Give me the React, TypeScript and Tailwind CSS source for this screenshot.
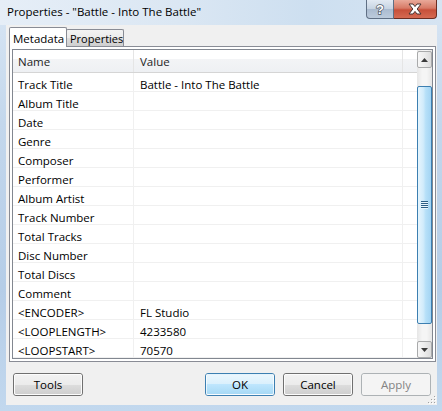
import React from "react";

const rows: [string, string][] = [
  ["Track Title", "Battle - Into The Battle"],
  ["Album Title", ""],
  ["Date", ""],
  ["Genre", ""],
  ["Composer", ""],
  ["Performer", ""],
  ["Album Artist", ""],
  ["Track Number", ""],
  ["Total Tracks", ""],
  ["Disc Number", ""],
  ["Total Discs", ""],
  ["Comment", ""],
  ["<ENCODER>", "FL Studio"],
  ["<LOOPLENGTH>", "4233580"],
  ["<LOOPSTART>", "70570"],
];

function WinButton({
  label,
  variant = "normal",
}: {
  label: string;
  variant?: "normal" | "default" | "disabled";
}) {
  const outer =
    variant === "default"
      ? "border-[#3c7fb1]"
      : variant === "disabled"
      ? "border-[#adb2b5]"
      : "border-[#707070]";
  const inner =
    variant === "default"
      ? "bg-[linear-gradient(to_bottom,#eaf6fd_0%,#d9f0fc_50%,#bee6fd_50%,#a7d9f5_100%)] border-[#ffffffb0]"
      : variant === "disabled"
      ? "bg-[#f4f4f4] border-[#f4f4f4]"
      : "bg-[linear-gradient(to_bottom,#f2f2f2_0%,#ebebeb_50%,#dddddd_50%,#cfcfcf_100%)] border-[#fcfcfc]";
  const text = variant === "disabled" ? "text-[#838383]" : "text-black";
  return (
    <div className={`w-[70px] h-[23px] rounded-[3px] border ${outer} flex`}>
      <div
        className={`flex-1 rounded-[2px] border ${inner} flex items-center justify-center ${text} leading-none pt-[1px]`}
      >
        {label}
      </div>
    </div>
  );
}

function ScrollArrow({ up }: { up: boolean }) {
  return (
    <div className="h-[17px] rounded-[2px] border border-[#a9aaab] bg-[linear-gradient(to_right,#f7f7f7,#ececec_50%,#dcdcdc)] flex items-center justify-center">
      <svg width="7" height="4" viewBox="0 0 7 4">
        {up ? (
          <path d="M0 4 L3.5 0 L7 4 Z" fill="#3a3a3a" />
        ) : (
          <path d="M0 0 L3.5 4 L7 0 Z" fill="#3a3a3a" />
        )}
      </svg>
    </div>
  );
}

export default function App() {
  return (
    <div
      className="w-[442px] h-[411px] relative overflow-hidden flex flex-col bg-[linear-gradient(to_bottom,#d9e6f4_0%,#c3d7ec_30%,#b5cde7_70%,#c2d8ee_100%)]"
      style={{ fontFamily: '"Open Sans", "Noto Sans", sans-serif' }}
    >
      {/* Title bar */}
      <div className="h-[25px] flex items-start bg-[linear-gradient(to_right,#e6eef7_0%,#dbe7f3_40%,#cddff0_70%,#d6e4f2_100%)]">
        <div className="pl-[7px] pt-[4px] text-[11.5px] leading-[16px] text-black whitespace-nowrap">
          Properties - "Battle - Into The Battle"
        </div>
        <div className="ml-auto mr-[5px] flex">
          <div className="w-[28px] h-[19px] rounded-bl-[4px] border border-t-0 border-[#5f6f84] bg-[linear-gradient(to_bottom,#e2eaf3,#c6d3e2_50%,#aabbd0_51%,#bccbdc)] flex items-center justify-center">
            <svg width="12" height="14" viewBox="0 0 12 14">
              <text
                x="6"
                y="12"
                textAnchor="middle"
                fontSize="13"
                fontWeight="700"
                fontFamily="Liberation Sans, sans-serif"
                fill="#ffffff"
                stroke="#4d5562"
                strokeWidth="1.4"
                paintOrder="stroke"
              >
                ?
              </text>
            </svg>
          </div>
          <div className="w-[43px] h-[19px] rounded-br-[4px] border border-t-0 border-l-0 border-[#6b2d22] bg-[linear-gradient(to_bottom,#e9a999,#d77a66_45%,#c7503a_55%,#d56a52)] flex items-center justify-center">
            <svg width="16" height="12" viewBox="0 0 16 12">
              <path
                d="M2 1 H6 L8 3.6 L10 1 H14 L10.2 6 L14 11 H10 L8 8.4 L6 11 H2 L5.8 6 Z"
                fill="#ffffff"
                stroke="#4a3330"
                strokeWidth="1"
                strokeLinejoin="round"
              />
            </svg>
          </div>
        </div>
      </div>

      {/* Client area */}
      <div className="h-[380px] ml-[6px] mr-[5px] bg-[#f0f0f0] flex flex-col relative text-[11.5px] text-black">
        {/* Tabs */}
        <div className="h-[21px] flex items-end pl-[3px] relative z-10">
          <div className="w-[58px] h-[20px] -mb-[1px] bg-white border border-b-0 border-[#898c95] rounded-t-[2px] flex items-start pl-[3px] pt-[3px] leading-[15px] whitespace-nowrap">
            Metadata
          </div>
          <div className="w-[58px] h-[17px] -ml-[1px] bg-[linear-gradient(to_bottom,#f3f3f3,#ebebeb_50%,#dddddd_50%,#cfcfcf)] border border-b-0 border-[#898c95] rounded-t-[2px] flex items-start pl-[3px] pt-[2px] leading-[14px] text-[11px] whitespace-nowrap overflow-hidden">
            Properties
          </div>
        </div>

        {/* Tab panel */}
        <div className="h-[316px] ml-[3px] mr-[1px] bg-white border border-[#898c95] p-[2px] flex">
          <div className="flex-1 border border-[#828790] flex bg-white">
            <div className="flex-1 flex flex-col">
              {/* Header */}
              <div className="h-[23px] flex border-b border-[#d5d5d5] bg-[linear-gradient(to_bottom,#ffffff_0%,#ffffff_40%,#f3f4f6_41%,#eef0f3_100%)] text-[#1e1e1e]">
                <div className="w-[121px] border-r border-[#e5e5e5] pl-[5px] pt-[5px] leading-[14px]">
                  Name
                </div>
                <div className="w-[269px] border-r border-[#e5e5e5] pl-[6px] pt-[5px] leading-[14px]">
                  Value
                </div>
                <div className="flex-1" />
              </div>
              {rows.map(([n, v], i) => (
                <div key={i} className="h-[19px] flex border-b border-[#f0f0f0]">
                  <div className="w-[121px] border-r border-[#f0f0f0] pl-[5px] pt-[5px] leading-[14px] whitespace-nowrap">
                    {n}
                  </div>
                  <div className="w-[269px] border-r border-[#f0f0f0] pl-[6px] pt-[5px] leading-[14px] whitespace-nowrap">
                    {v}
                  </div>
                  <div className="flex-1" />
                </div>
              ))}
            </div>
            {/* Scrollbar */}
            <div className="w-[15px] flex flex-col pt-[1px] bg-[linear-gradient(to_right,#e6e6e6,#f5f5f5_35%,#f5f5f5_65%,#e6e6e6)]">
              <ScrollArrow up />
              <div className="h-[18px]" />
              <div className="h-[238px] rounded-[2px] border border-[#3c7fb1] bg-[linear-gradient(to_right,#e6f5fd,#d2ecfb_40%,#b6e0f8_60%,#a3d4f3)] flex items-center justify-center">
                <svg width="7" height="8" viewBox="0 0 7 8">
                  <rect x="0" y="0" width="7" height="1" fill="#2d5f86" />
                  <rect x="0" y="2" width="7" height="1" fill="#2d5f86" />
                  <rect x="0" y="4" width="7" height="1" fill="#2d5f86" />
                  <rect x="0" y="6" width="7" height="1" fill="#2d5f86" />
                  <rect x="0" y="1" width="7" height="1" fill="#e9f6fd" />
                  <rect x="0" y="3" width="7" height="1" fill="#e9f6fd" />
                  <rect x="0" y="5" width="7" height="1" fill="#e9f6fd" />
                  <rect x="0" y="7" width="7" height="1" fill="#e9f6fd" />
                </svg>
              </div>
              <div className="h-[17px]" />
              <ScrollArrow up={false} />
            </div>
          </div>
        </div>

        {/* Buttons */}
        <div className="flex items-start pt-[11px] pl-[7px] pr-[6px]">
          <WinButton label="Tools" />
          <div className="ml-auto flex gap-[8px]">
            <WinButton label="OK" variant="default" />
            <WinButton label="Cancel" />
            <WinButton label="Apply" variant="disabled" />
          </div>
        </div>

        {/* Resize grip */}
        <svg
          className="absolute right-[1px] bottom-[1px]"
          width="8"
          height="8"
          viewBox="0 0 8 8"
        >
          {[
            [6, 0],
            [6, 3],
            [3, 3],
            [6, 6],
            [3, 6],
            [0, 6],
          ].map(([x, y], i) => (
            <g key={i}>
              <rect x={x + 1} y={y + 1} width="1" height="1" fill="#ffffff" />
              <rect x={x} y={y} width="1" height="1" fill="#a0a0a0" />
            </g>
          ))}
        </svg>
      </div>
    </div>
  );
}
